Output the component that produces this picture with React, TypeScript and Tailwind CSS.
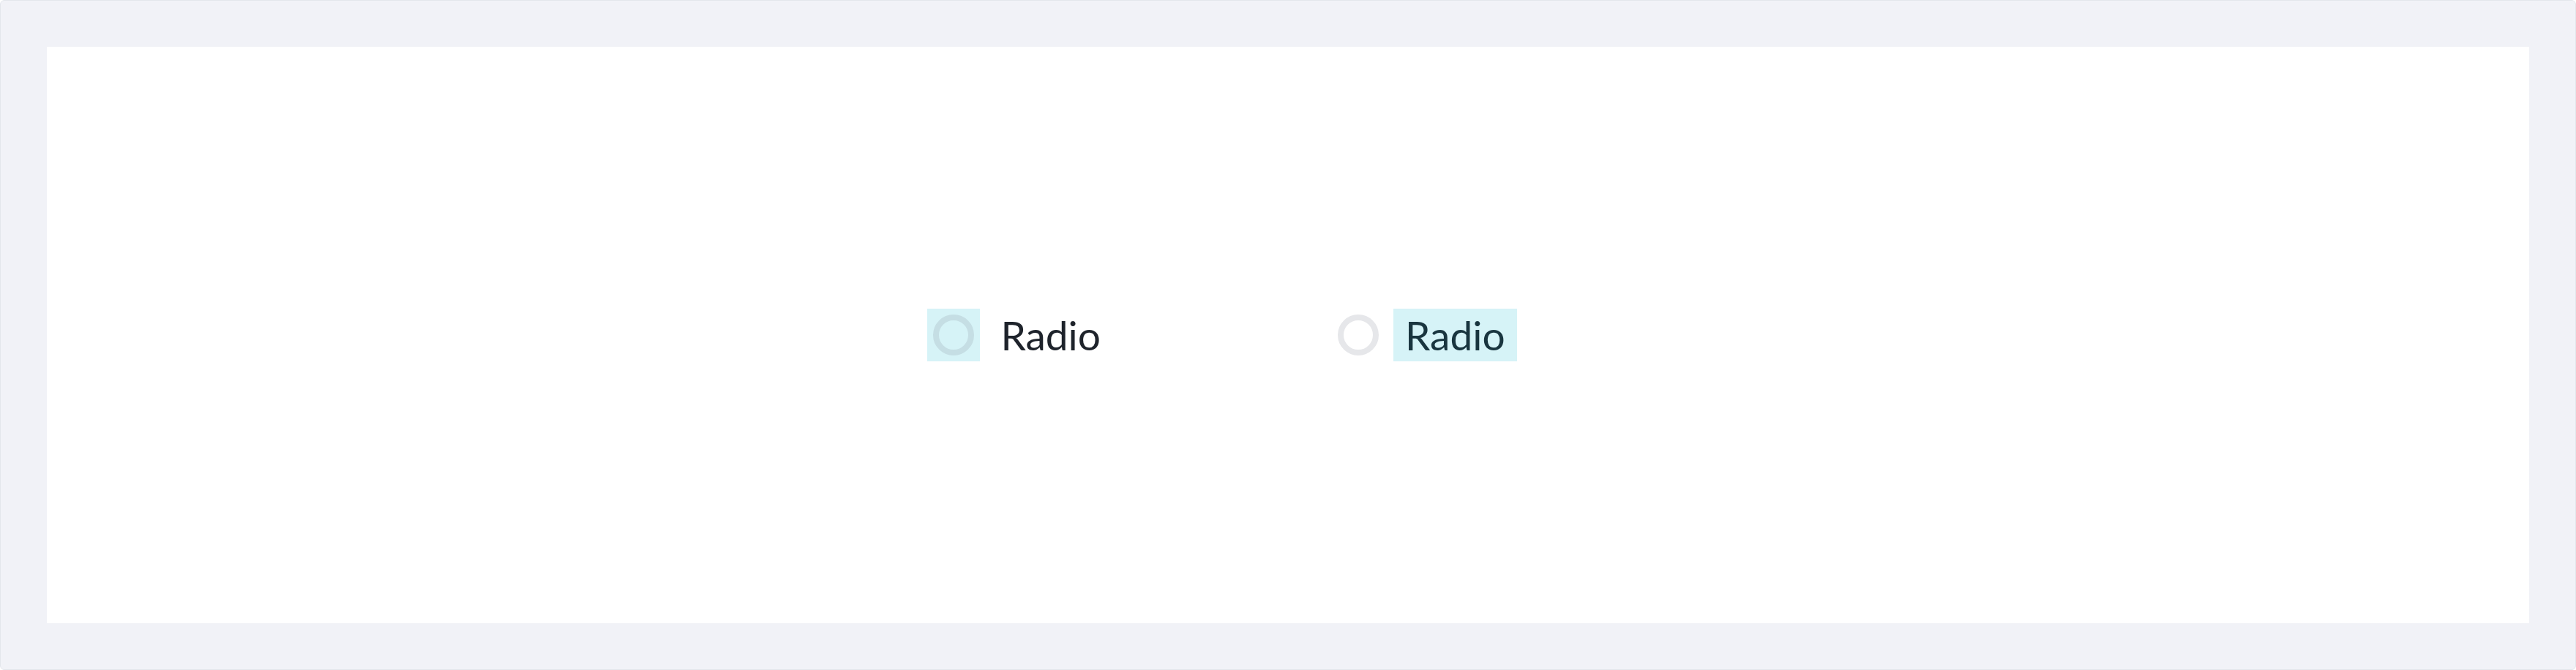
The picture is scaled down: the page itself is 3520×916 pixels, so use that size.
import React from 'react';

function RadioCircle({ focused }: { focused?: boolean }) {
  return (
    <div
      className={`flex h-[72px] w-[72px] items-center justify-center ${focused ? 'bg-[#d6f3f7]' : ''}`}
    >
      <div
        className={`h-[56px] w-[56px] rounded-full border-[8px] ${
          focused ? 'border-[#c5dee4] bg-[#d6f3f7]' : 'border-[#e6e7ea] bg-white'
        }`}
      />
    </div>
  );
}

function RadioItem({ circleFocused, labelFocused }: { circleFocused?: boolean; labelFocused?: boolean }) {
  return (
    <label className="flex items-center gap-[12px]">
      <RadioCircle focused={circleFocused} />
      <span
        className={`flex h-[72px] items-center px-[16px] text-[55px] leading-none ${
          labelFocused ? 'bg-[#d6f3f7] text-[#19353f]' : 'text-[#1e232b]'
        }`}
      >
        Radio
      </span>
    </label>
  );
}

export default function App() {
  return (
    <div
      className="h-[916px] w-[3520px] rounded-[6px] border border-[#e3e6ec] bg-[#f1f2f7] p-[63px]"
      style={{ fontFamily: 'Lato, "Noto Sans", sans-serif' }}
    >
      <div className="flex h-full items-center justify-center gap-[300px] bg-white pr-[180px]">
        <RadioItem circleFocused />
        <RadioItem labelFocused />
      </div>
    </div>
  );
}
